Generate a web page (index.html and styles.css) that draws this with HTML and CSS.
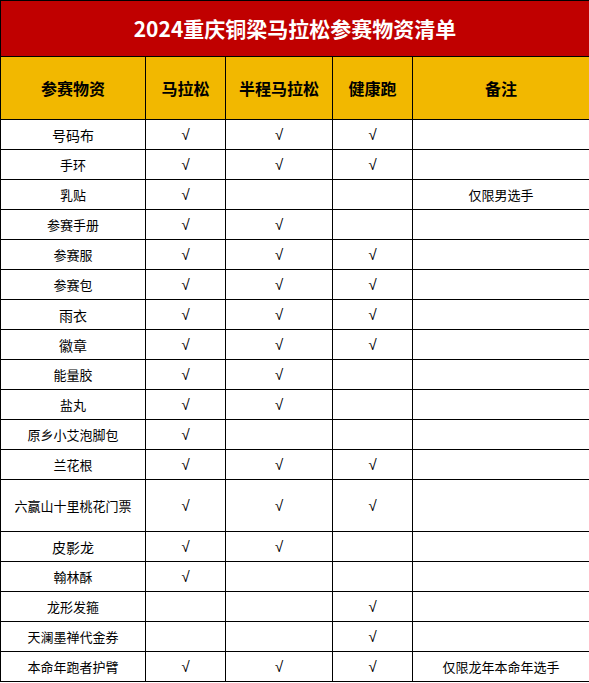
FILE: index.html
```html
<!DOCTYPE html>
<html lang="zh">
<head>
<meta charset="utf-8">
<title>2024重庆铜梁马拉松参赛物资清单</title>
<link rel="stylesheet" href="styles.css">
</head>
<body>
<table class="sheet">
  <colgroup>
    <col class="c-item"><col class="c-full"><col class="c-half"><col class="c-fun"><col class="c-note">
  </colgroup>
  <thead>
    <tr class="title-row"><th colspan="5">2024重庆铜梁马拉松参赛物资清单</th></tr>
    <tr class="head-row"><th>参赛物资</th><th>马拉松</th><th>半程马拉松</th><th>健康跑</th><th>备注</th></tr>
  </thead>
  <tbody>
    <tr class="big"><td>号码布</td><td class="ck">√</td><td class="ck">√</td><td class="ck">√</td><td></td></tr>
    <tr><td>手环</td><td class="ck">√</td><td class="ck">√</td><td class="ck">√</td><td></td></tr>
    <tr><td>乳贴</td><td class="ck">√</td><td></td><td></td><td>仅限男选手</td></tr>
    <tr><td>参赛手册</td><td class="ck">√</td><td class="ck">√</td><td></td><td></td></tr>
    <tr><td>参赛服</td><td class="ck">√</td><td class="ck">√</td><td class="ck">√</td><td></td></tr>
    <tr><td>参赛包</td><td class="ck">√</td><td class="ck">√</td><td class="ck">√</td><td></td></tr>
    <tr class="big"><td>雨衣</td><td class="ck">√</td><td class="ck">√</td><td class="ck">√</td><td></td></tr>
    <tr class="big"><td>徽章</td><td class="ck">√</td><td class="ck">√</td><td class="ck">√</td><td></td></tr>
    <tr><td>能量胶</td><td class="ck">√</td><td class="ck">√</td><td></td><td></td></tr>
    <tr><td>盐丸</td><td class="ck">√</td><td class="ck">√</td><td></td><td></td></tr>
    <tr><td>原乡小艾泡脚包</td><td class="ck">√</td><td></td><td></td><td></td></tr>
    <tr><td>兰花根</td><td class="ck">√</td><td class="ck">√</td><td class="ck">√</td><td></td></tr>
    <tr class="tall"><td>六赢山十里桃花门票</td><td class="ck">√</td><td class="ck">√</td><td class="ck">√</td><td></td></tr>
    <tr class="big"><td>皮影龙</td><td class="ck">√</td><td class="ck">√</td><td></td><td></td></tr>
    <tr><td>翰林酥</td><td class="ck">√</td><td></td><td></td><td></td></tr>
    <tr><td>龙形发箍</td><td></td><td></td><td class="ck">√</td><td></td></tr>
    <tr><td>天澜墨禅代金券</td><td></td><td></td><td class="ck">√</td><td></td></tr>
    <tr><td>本命年跑者护臂</td><td class="ck">√</td><td class="ck">√</td><td class="ck">√</td><td>仅限龙年本命年选手</td></tr>
  </tbody>
</table>
</body>
</html>
```

FILE: styles.css
```css
html, body {
  margin: 0;
  padding: 0;
  background: #ffffff;
}

body {
  font-family: "Noto Sans CJK SC", "Liberation Sans", sans-serif;
  color: #000;
}

.sheet {
  border-collapse: collapse;
  table-layout: fixed;
  width: 589px;
}

.c-item { width: 145px; }
.c-full { width: 80px; }
.c-half { width: 107px; }
.c-fun { width: 80px; }
.c-note { width: 177px; }

.sheet th,
.sheet td {
  border: 1px solid #000;
  text-align: center;
  vertical-align: middle;
  padding: 0;
}

.title-row th {
  height: 55px;
  background: #c00000;
  color: #ffffff;
  font-size: 21px;
  font-weight: bold;
  line-height: 1;
}

.head-row th {
  height: 62px;
  background: #f2b800;
  font-size: 16px;
  font-weight: bold;
  line-height: 1;
}

.sheet td {
  height: 29px;
  font-size: 13px;
  line-height: 1;
}

.sheet td.ck {
  font-family: "Liberation Sans", "DejaVu Sans", sans-serif;
  font-size: 15px;
}

.sheet tr.big td:first-child {
  font-size: 14px;
}

.sheet tr.tall td {
  height: 51px;
}
```
